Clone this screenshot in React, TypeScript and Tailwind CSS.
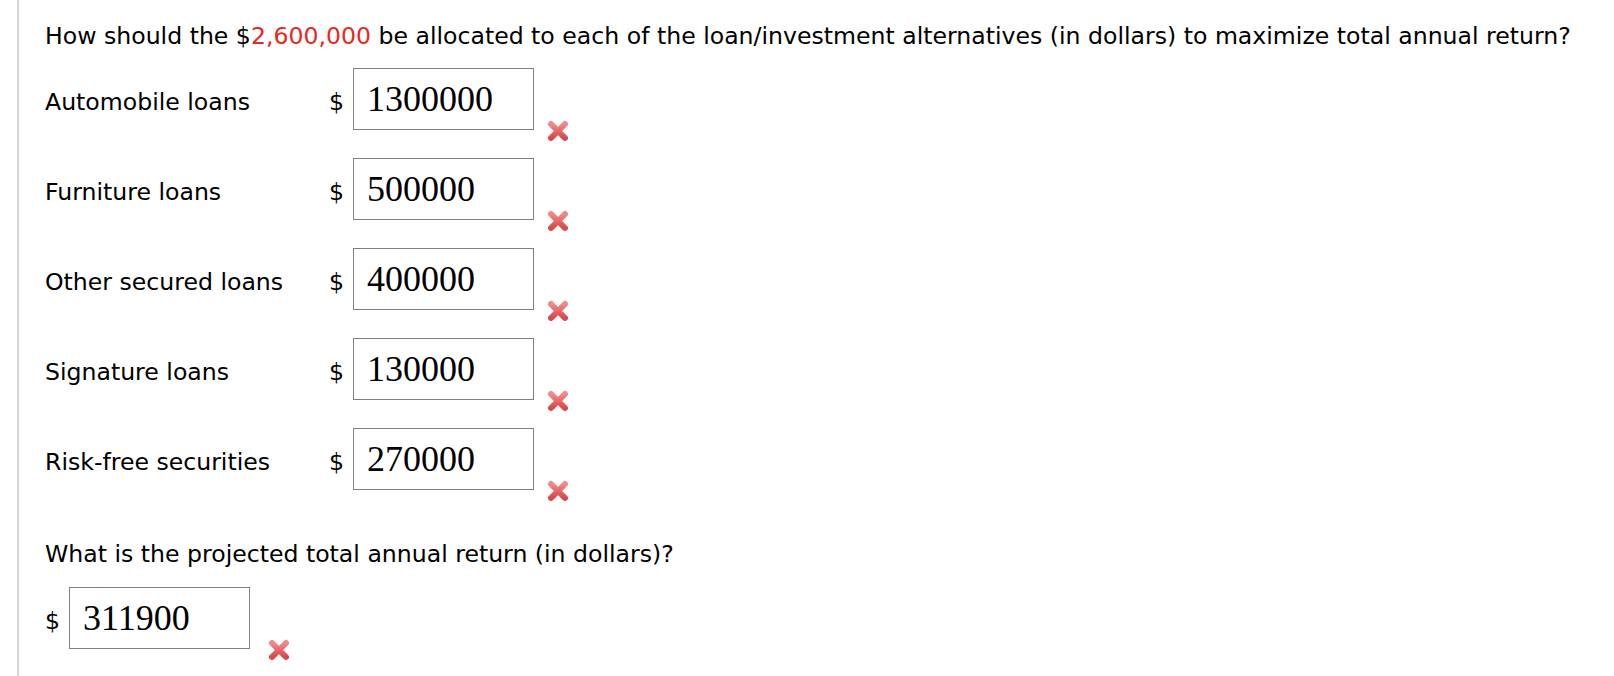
import React from 'react'

const rows = [
  { label: 'Automobile loans', value: '1300000' },
  { label: 'Furniture loans', value: '500000' },
  { label: 'Other secured loans', value: '400000' },
  { label: 'Signature loans', value: '130000' },
  { label: 'Risk-free securities', value: '270000' },
]

function WrongMark() {
  return (
    <svg width="22" height="22" viewBox="0 0 22 22" className="shrink-0">
      <defs>
        <linearGradient id="xg" x1="0" y1="0" x2="0" y2="1">
          <stop offset="0" stopColor="#f08a8a" />
          <stop offset="1" stopColor="#d9484a" />
        </linearGradient>
      </defs>
      <path d="M4 4 L18 18 M18 4 L4 18" stroke="url(#xg)" strokeWidth="6" strokeLinecap="round" />
    </svg>
  )
}

function Answer({ value, wide }: { value: string; wide?: boolean }) {
  return (
    <div className="flex items-start">
      <span className="mt-[23px] mr-[9px] text-[23.6px] leading-none">$</span>
      <div className="w-[181px] h-[62px] border border-[#808080] bg-white flex items-center pl-[13px] font-['Liberation_Serif',serif] text-[36px] leading-none text-black">
        {value}
      </div>
      <div className={wide ? 'mt-[52px] ml-[18px]' : 'mt-[52px] ml-[13px]'}>
        <WrongMark />
      </div>
    </div>
  )
}

export default function App() {
  return (
    <div className="min-h-screen bg-white text-black font-['DejaVu_Sans',Verdana,sans-serif]">
      <div className="ml-[17px] border-l-2 border-[#d4d4d4] pl-[26px] pt-[21px] pb-[30px] min-h-[676px]">
        <p className="text-[23.6px] leading-[30px]">
          How should the $<span className="text-[#e8281c]">2,600,000</span> be allocated to each of the
          loan/investment alternatives (in dollars) to maximize total annual return?
        </p>

        <div className="mt-[17px] flex flex-col gap-[16px]">
          {rows.map(r => (
            <div key={r.label} className="flex items-start">
              <span className="w-[284px] mt-[23px] text-[23.6px] leading-none">{r.label}</span>
              <Answer value={r.value} />
            </div>
          ))}
        </div>

        <p className="mt-[37px] text-[23.6px] leading-[30px]">What is the projected total annual return (in dollars)?</p>
        <div className="mt-[18px]">
          <Answer value="311900" wide />
        </div>
      </div>
    </div>
  )
}
